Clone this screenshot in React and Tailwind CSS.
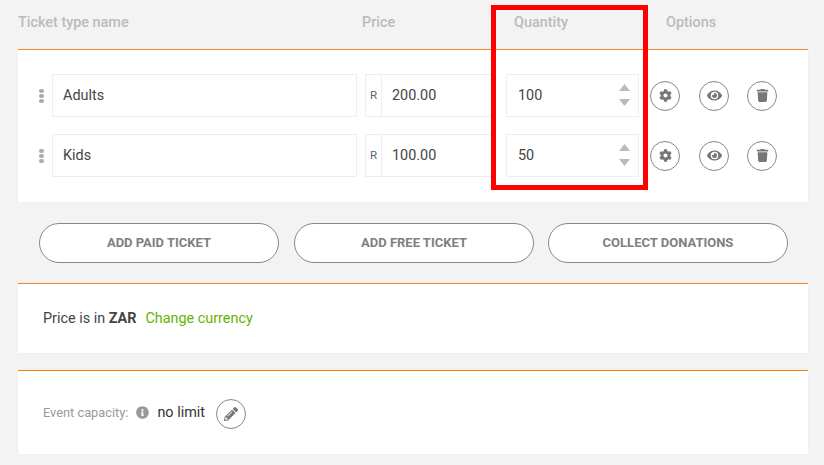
import { FaCog, FaEye, FaTrash, FaPencilAlt, FaInfoCircle } from "react-icons/fa";

const tickets = [
  { name: "Adults", price: "200.00", quantity: "100" },
  { name: "Kids", price: "100.00", quantity: "50" },
];

function RoundButton({ children, className = "" }) {
  return (
    <button className={`flex h-[30px] w-[30px] items-center justify-center rounded-full border border-[#888] bg-white text-[#777] ${className}`}>
      {children}
    </button>
  );
}

function Handle() {
  return (
    <div className="flex w-[34px] flex-col items-center gap-[1px] pl-[13px]">
      <span className="h-[4px] w-[5px] rounded-full bg-[#aaa]" />
      <span className="h-[4px] w-[5px] rounded-full bg-[#aaa]" />
      <span className="h-[4px] w-[5px] rounded-full bg-[#aaa]" />
    </div>
  );
}

function Spinner() {
  return (
    <div className="mb-[2px] flex flex-col gap-[8px]">
      <svg width="11" height="7" viewBox="0 0 11 7" className="block"><path d="M5.5 0L11 7H0z" fill="#bbb" /></svg>
      <svg width="11" height="7" viewBox="0 0 11 7" className="block"><path d="M0 0h11L5.5 7z" fill="#bbb" /></svg>
    </div>
  );
}

function TicketRow({ ticket }) {
  return (
    <div className="flex h-[43px] items-center">
      <Handle />
      <div className="flex h-full w-[305px] items-center border border-[#eee] pl-[10px] text-[14.4px] text-[#444]">{ticket.name}</div>
      <div className="ml-2 flex h-full w-[130px] items-center border border-[#eee] text-[14.4px] text-[#444]">
        <div className="flex h-full w-[16px] shrink-0 items-center justify-center border-r border-[#eee] text-[11.5px] text-[#567]">R</div>
        <span className="pl-[10px]">{ticket.price}</span>
      </div>
      <div className="ml-[11px] flex h-full w-[133px] items-center justify-between border border-[#eee] pl-[11px] pr-[8px] text-[14.4px] text-[#444]">
        <span>{ticket.quantity}</span>
        <Spinner />
      </div>
      <div className="ml-[11px] flex">
        <RoundButton><FaCog size={13} /></RoundButton>
        <RoundButton className="ml-[19px]"><FaEye size={15} /></RoundButton>
        <RoundButton className="ml-[18px]"><FaTrash size={13} /></RoundButton>
      </div>
    </div>
  );
}

function PillButton({ children, className = "" }) {
  return (
    <button className={`flex h-[40px] w-[240px] items-center justify-center rounded-[20px] border border-[#888] bg-white text-[13px] font-bold text-[#808080] ${className}`}>
      {children}
    </button>
  );
}

export default function App() {
  return (
    <div className="relative h-[465px] w-[824px] overflow-hidden bg-[#f3f3f3] pr-[16px] pl-[18px] font-['Roboto',sans-serif]">
      {/* header */}
      <div className="flex h-[49px] pt-[15px] text-[14.4px] leading-[16px] font-medium text-[#bbb]">
        <div className="w-[344px]">Ticket type name</div>
        <div className="w-[152px]">Price</div>
        <div className="w-[152px]">Quantity</div>
        <div>Options</div>
      </div>

      <div className="flex h-[153px] flex-col gap-[17px] border-t border-[#f58a2a] bg-white pt-[24px] shadow-[0_0_1px_rgba(0,0,0,0.1)]">
        {tickets.map((t) => (
          <TicketRow key={t.name} ticket={t} />
        ))}
      </div>

      <div className="flex pt-[21px] pb-[20px] pl-[21px]">
        <PillButton>ADD PAID TICKET</PillButton>
        <PillButton className="ml-[15px]">ADD FREE TICKET</PillButton>
        <PillButton className="ml-[14px]">COLLECT DONATIONS</PillButton>
      </div>

      <div className="flex h-[70px] items-center border-t border-[#f58a2a] bg-white pl-[25px] text-[14.4px] text-[#444] shadow-[0_0_1px_rgba(0,0,0,0.1)]">
        <span>Price is in <b className="font-bold">ZAR</b></span>
        <a className="ml-[9px] text-[#66b300]">Change currency</a>
      </div>

      <div className="mt-[17px] flex h-[84px] items-center border-t border-[#ff8000] bg-white pl-[25px] shadow-[0_0_1px_rgba(0,0,0,0.1)]">
        <span className="text-[12.8px] text-[#999]">Event capacity:</span>
        <FaInfoCircle size={13} className="ml-[8px] text-[#999]" />
        <span className="ml-[8px] text-[14.4px] text-[#333]">no limit</span>
        <RoundButton className="mt-[3px] ml-[11px]"><FaPencilAlt size={14} /></RoundButton>
      </div>

      {/* red annotation */}
      <div className="absolute top-[5px] left-[491px] h-[185px] w-[157px] border-[5px] border-[#f00]" />
    </div>
  );
}
